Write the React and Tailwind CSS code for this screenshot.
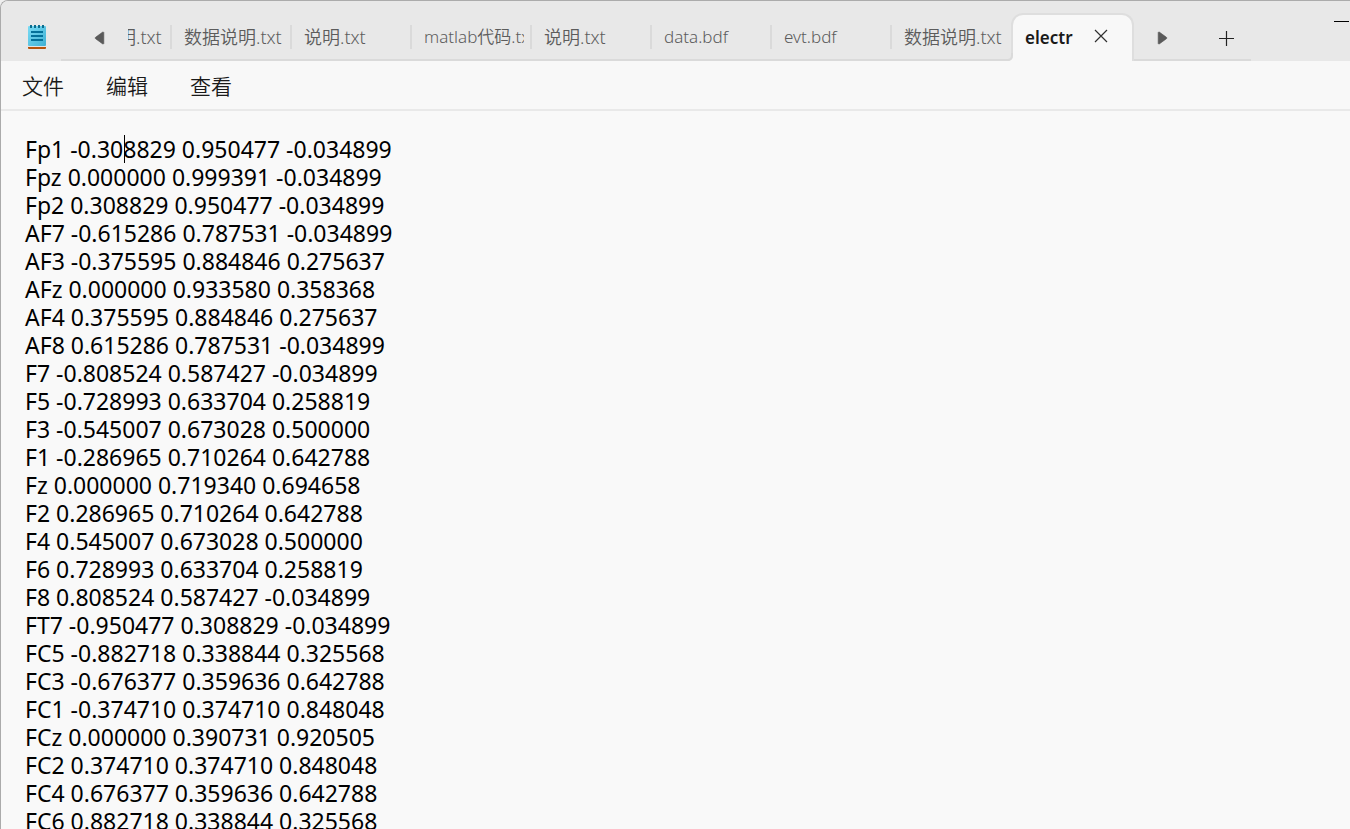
import { useState } from 'react'

const TABS = [
  { label: '数据说明.txt', size: 'text-[18px]' },
  { label: '数据说明.txt', size: 'text-[18px]' },
  { label: '说明.txt', size: 'text-[18px]' },
  { label: 'matlab代码.txt', size: 'text-[17px]' },
  { label: '说明.txt', size: 'text-[18px]' },
  { label: 'data.bdf', size: 'text-[17px]' },
  { label: 'evt.bdf', size: 'text-[17px]' },
  { label: '数据说明.txt', size: 'text-[18px]' },
]

const MENUS = ['文件', '编辑', '查看']

const ELECTRODES = `Fp1 -0.308829 0.950477 -0.034899
Fpz 0.000000 0.999391 -0.034899
Fp2 0.308829 0.950477 -0.034899
AF7 -0.615286 0.787531 -0.034899
AF3 -0.375595 0.884846 0.275637
AFz 0.000000 0.933580 0.358368
AF4 0.375595 0.884846 0.275637
AF8 0.615286 0.787531 -0.034899
F7 -0.808524 0.587427 -0.034899
F5 -0.728993 0.633704 0.258819
F3 -0.545007 0.673028 0.500000
F1 -0.286965 0.710264 0.642788
Fz 0.000000 0.719340 0.694658
F2 0.286965 0.710264 0.642788
F4 0.545007 0.673028 0.500000
F6 0.728993 0.633704 0.258819
F8 0.808524 0.587427 -0.034899
FT7 -0.950477 0.308829 -0.034899
FC5 -0.882718 0.338844 0.325568
FC3 -0.676377 0.359636 0.642788
FC1 -0.374710 0.374710 0.848048
FCz 0.000000 0.390731 0.920505
FC2 0.374710 0.374710 0.848048
FC4 0.676377 0.359636 0.642788
FC6 0.882718 0.338844 0.325568`

// ─── Icons ───────────────────────────────────────────────────────────────────
function NotepadIcon() {
  return (
    <svg width="19" height="25" viewBox="0 0 19 25" aria-hidden="true">
      <defs>
        <linearGradient id="pad" x1="0" y1="0" x2="1" y2="1">
          <stop offset="0" stopColor="#7bdcf5" />
          <stop offset="1" stopColor="#3fb0d3" />
        </linearGradient>
      </defs>
      <rect x="1" y="20" width="18" height="4" rx="1" fill="#b5530c" />
      <rect x="1" y="19" width="18" height="3" fill="#e4e4e4" />
      <rect x="1" y="1" width="18" height="20" rx="1" fill="url(#pad)" />
      <path d="M4 0v3M8 0v3M12 0v3M16 0v3" stroke="#0b6c8d" strokeWidth="2" />
      <path d="M4 7h12M4 11h12M4 15h12" stroke="#04719a" strokeWidth="2" />
    </svg>
  )
}

function Triangle({ className }) {
  return (
    <svg width="11" height="14" viewBox="0 0 10 13" className={className} aria-hidden="true">
      <path
        d="M1 1.6v9.800c0 .6.6.9 1 .6l6.700-4.900c.5-.4.5-.8 0-1.200L2 1c-.4-.3-1 0-1 .6z"
        fill="#5a5a5a"
        stroke="#5a5a5a"
        strokeWidth=".6"
      />
    </svg>
  )
}

function CloseIcon() {
  return (
    <svg width="14" height="14" viewBox="0 0 14 14" aria-hidden="true">
      <path d="M1 1l12 12M13 1L1 13" stroke="#303030" strokeWidth="1.2" />
    </svg>
  )
}

function PlusIcon() {
  return (
    <svg width="15" height="15" viewBox="0 0 15 15" aria-hidden="true">
      <path d="M7.5 0v15M0 7.5h15" stroke="#222" strokeWidth="1.2" />
    </svg>
  )
}

// ─── Tab bar ─────────────────────────────────────────────────────────────────
function Tab({ label, size, last }) {
  return (
    <div className="flex w-[120px] shrink-0 items-start pt-6">
      <button
        type="button"
        className={`min-w-0 flex-1 overflow-hidden whitespace-nowrap pl-3 text-left font-[350] leading-6 text-[#5c5c5c] ${size}`}
      >
        {label}
      </button>
      <span className={`ml-[6px] h-6 w-0.5 ${last ? '' : 'bg-[#dadada]'}`} />
    </div>
  )
}

function ActiveTab() {
  return (
    <div className="relative z-10 -ml-px mt-3 flex w-[123px] shrink-0 items-center justify-between rounded-t-xl border-2 border-b-0 border-[#dedede] bg-[#f8f8f8] pl-3">
      <svg width="8" height="8" viewBox="0 0 8 8" className="absolute -left-[7px] bottom-0" aria-hidden="true">
        <path d="M8 0v8H1C5 8 7 6 7 1V0z" fill="#f8f8f8" />
        <path d="M0 7h1.500C4.500 7 6 5 6 2V0" fill="none" stroke="#dadada" strokeWidth="2" />
      </svg>
      <button type="button" className="text-[17px] font-semibold text-[#1a1a1a]">electr</button>
      <button type="button" aria-label="关闭标签页" className="mr-6 pb-1">
        <CloseIcon />
      </button>
    </div>
  )
}

function TitleBar() {
  return (
    <header className="flex h-[60px] shrink-0 bg-[#e8e8e8]">
      <div className="flex w-[60px] shrink-0 items-center pl-[26px] pt-3">
        <NotepadIcon />
      </div>
      <button
        type="button"
        aria-label="向左滚动"
        className="flex w-[67px] shrink-0 items-center border-b-2 border-[#dadada] pl-[33px] pt-4"
      >
        <Triangle className="rotate-180" />
      </button>
      <nav className="flex w-full min-w-0 max-w-[884px] justify-end overflow-hidden border-b-2 border-[#dadada]">
        {TABS.map((tab, i) => (
          <Tab key={i} {...tab} last={i === TABS.length - 1} />
        ))}
      </nav>
      <ActiveTab />
      <div className="flex w-[117px] shrink-0 items-center border-b-2 border-[#dadada] pl-[23px] pt-4">
        <button type="button" aria-label="向右滚动">
          <Triangle />
        </button>
        <button type="button" aria-label="新建标签页" className="ml-[51px]">
          <PlusIcon />
        </button>
      </div>
      <button type="button" aria-label="最小化" className="ml-auto mt-3 flex h-4 w-4 shrink-0 items-center">
        <span className="h-px w-[15px] bg-black" />
      </button>
    </header>
  )
}

// ─── Menu ────────────────────────────────────────────────────────────────────
function MenuBar() {
  return (
    <nav className="flex h-[50px] shrink-0 items-center gap-[42px] border-b-2 border-[#e9e9e9] bg-[#f8f8f8] pl-[21px] pt-[3px]">
      {MENUS.map((menu) => (
        <button key={menu} type="button" className="text-[21px] font-[350] text-[#1a1a1a]">
          {menu}
        </button>
      ))}
    </nav>
  )
}

// ─── Text area ───────────────────────────────────────────────────────────────
function Editor() {
  const [text, setText] = useState(ELECTRODES)
  return (
    <main className="relative flex min-h-0 flex-1 bg-[#f9f9f9]">
      <textarea
        aria-label="文本编辑器"
        spellCheck={false}
        value={text}
        onChange={(e) => setText(e.target.value)}
        className="flex-1 resize-none overflow-hidden pl-6 pt-6 font-['Noto_Sans'] text-[23px] leading-[28px] text-black outline-none"
      />
      {/* insertion point */}
      <span className="absolute left-[123px] top-6 h-7 w-px bg-black" aria-hidden="true" />
    </main>
  )
}

export default function App() {
  return (
    <div className="h-screen bg-[#eeeeee]">
      <div className="flex h-full flex-col overflow-hidden rounded-tl-lg border-l border-t border-[#ababab] font-['Noto_Sans','Noto_Sans_CJK_SC',sans-serif]">
        <TitleBar />
        <MenuBar />
        <Editor />
      </div>
    </div>
  )
}
